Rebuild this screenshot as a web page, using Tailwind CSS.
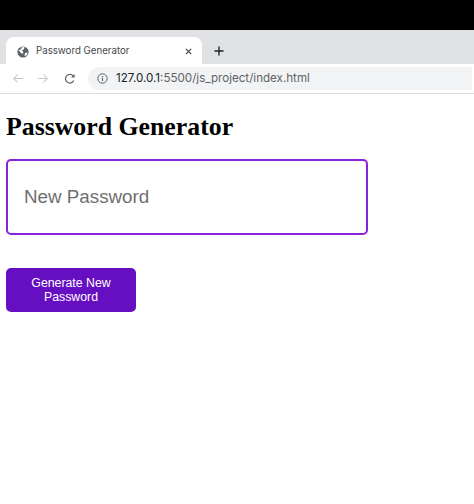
<!doctype html>
<html>
<head>
<meta charset="utf-8">
<script src="https://cdn.jsdelivr.net/npm/@tailwindcss/browser@4"></script>
</head>
<body class="bg-white w-[474px] h-[504px] overflow-hidden font-[Liberation_Sans,Arial,sans-serif]">
<div class="h-[30px] bg-black"></div>
<div class="h-[34px] bg-[#dfe1e5] flex items-end pl-[6px]">
  <div class="w-[196px] h-[27px] bg-white rounded-t-[8px] flex items-center pl-[11px] pr-[10px] pt-[2px]">
    <svg class="w-[12px] h-[12px] shrink-0" viewBox="0 0 12 12"><circle cx="6" cy="6" r="5.6" fill="#5f6368"/><path d="M1.5 4 L4 3.5 L5 1 L7.5 1.2 L7 3 L5 4.5 L6.5 6 L5.5 8 L4 7 Z M8 7 L10.8 6.5 L9.5 9.5 L7.5 10 Z" fill="#fff"/></svg>
    <span class="ml-[7px] text-[9.7px] text-[#45474a] font-[Inter,sans-serif] whitespace-nowrap">Password Generator</span>
    <svg class="ml-auto w-[7px] h-[7px]" viewBox="0 0 8 8"><path d="M1 1 L7 7 M7 1 L1 7" stroke="#3c4043" stroke-width="1.3"/></svg>
  </div>
  <svg class="ml-[12px] w-[10px] h-[10px] mb-[8px]" viewBox="0 0 11 11"><path d="M5.5 0.5 V10.5 M0.5 5.5 H10.5" stroke="#202124" stroke-width="1.5"/></svg>
</div>
<div class="h-[29px] bg-white border-b border-[#dadce0] flex items-center pl-[12px] box-content">
  <svg class="w-[12px] h-[11px]" viewBox="0 0 14 12"><path d="M13 6 H2 M6.5 1.5 L2 6 L6.5 10.5" stroke="#c4c7ca" stroke-width="1.2" fill="none"/></svg>
  <svg class="ml-[13px] w-[12px] h-[11px]" viewBox="0 0 14 12"><path d="M1 6 H12 M7.5 1.5 L12 6 L7.5 10.5" stroke="#c4c7ca" stroke-width="1.2" fill="none"/></svg>
  <svg class="ml-[15px] w-[12px] h-[12px]" viewBox="0 0 13 13"><path d="M10.6 8.2 A4.7 4.7 0 1 1 9.9 3.1" stroke="#5f6368" stroke-width="1.3" fill="none"/><path d="M11.5 1 V5 H7.5 Z" fill="#5f6368"/></svg>
  <div class="ml-[12px] w-[384px] h-[23px] bg-[#f1f3f4] rounded-l-full flex items-center pl-[9px]">
    <svg class="w-[11px] h-[11px]" viewBox="0 0 11 11"><circle cx="5.5" cy="5.5" r="4.7" stroke="#5f6368" stroke-width="1" fill="none"/><path d="M5.5 4.8 V8 M5.5 3 V3.9" stroke="#5f6368" stroke-width="1.1"/></svg>
    <span class="ml-[8px] pt-[1px] text-[11.6px] text-[#5f6368] font-[Inter,sans-serif] whitespace-nowrap"><span class="text-[#202124]">127.0.0.1</span>:5500/js_project/index.html</span>
  </div>
</div>
<main class="pl-[6px]">
  <h1 class="mt-[17px] text-[25.8px] leading-[31px] font-bold text-black font-[Liberation_Serif,serif]">Password Generator</h1>
  <div class="mt-[17px] w-[362px] h-[76px] border-2 border-[#8a22dc] rounded-[5px] flex items-center pl-[16px]">
    <span class="text-[18.8px] text-[#6f6f6f]">New Password</span>
  </div>
  <button class="mt-[33px] block w-[130px] h-[44px] bg-[#660fc2] rounded-[5px] text-white text-[12.3px] leading-[14px] text-center px-[16px]">Generate New Password</button>
</main>
</body>
</html>
